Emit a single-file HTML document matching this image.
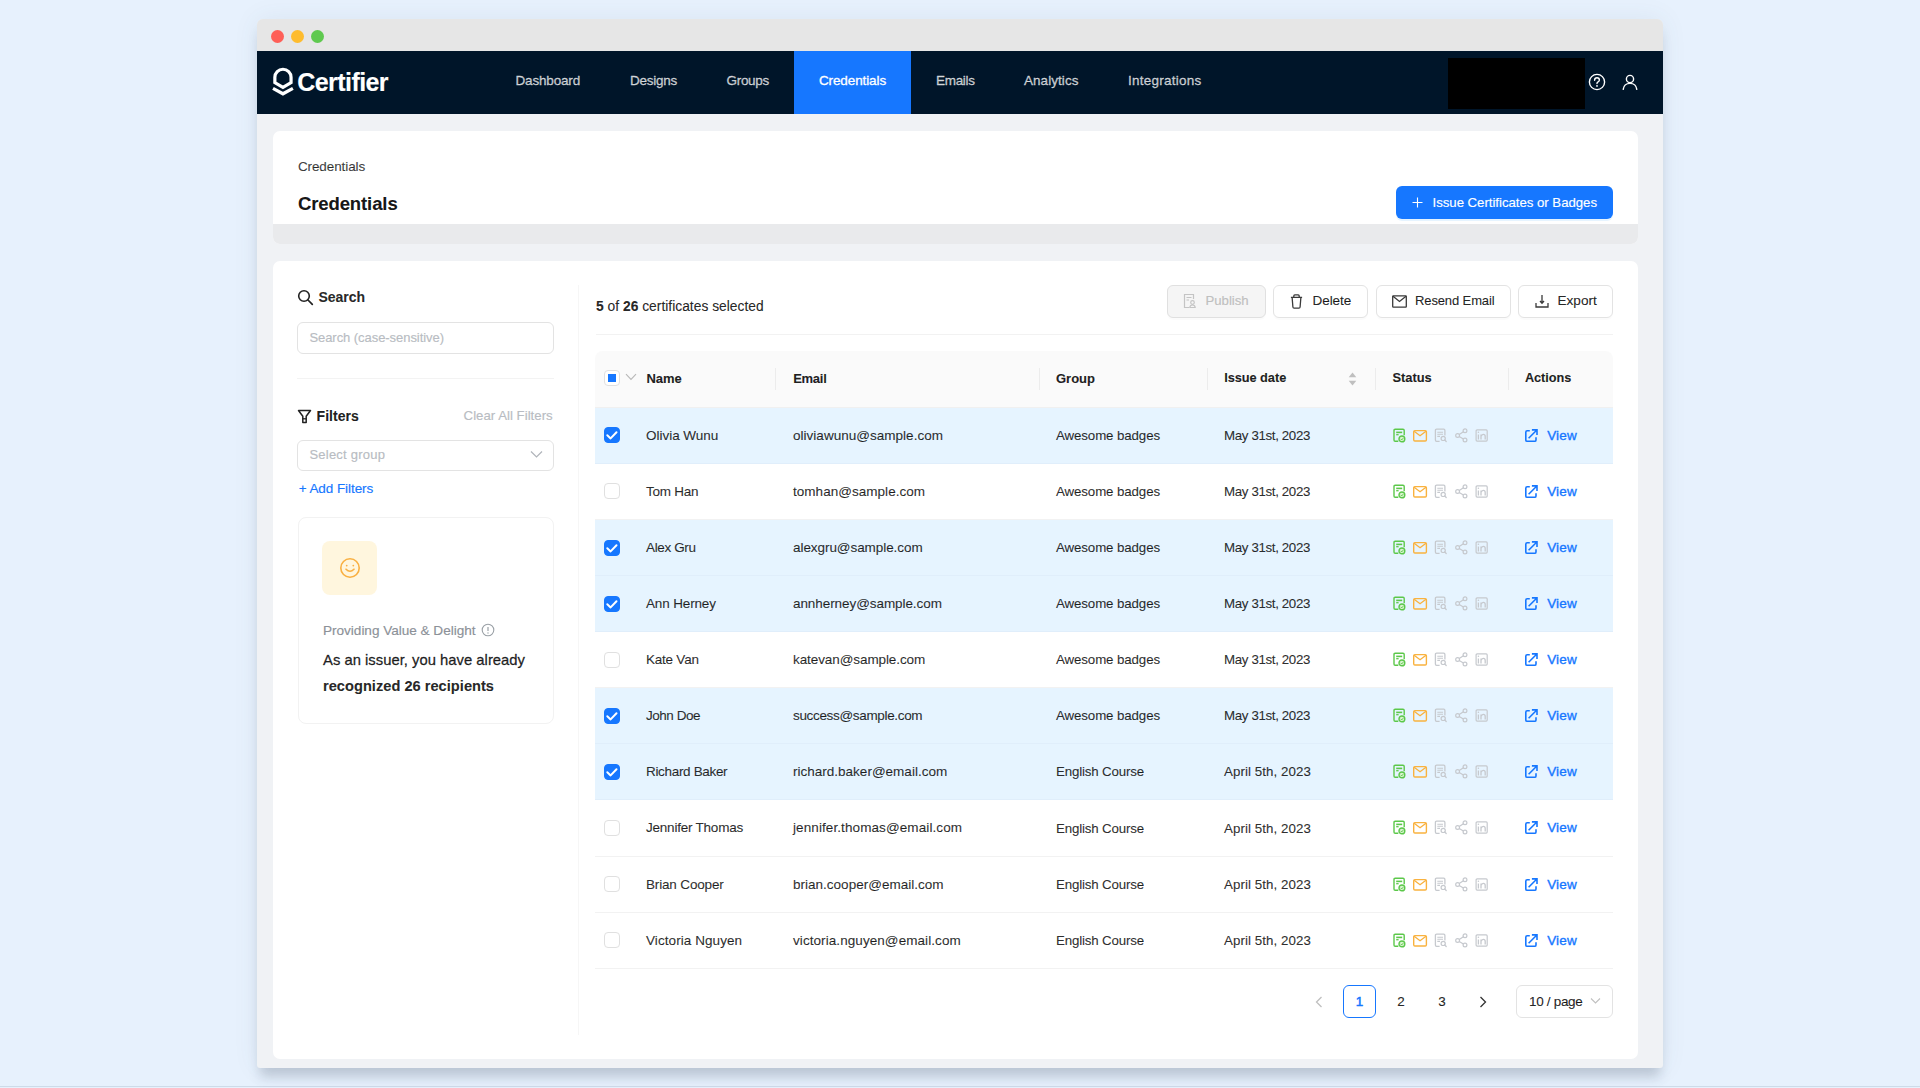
<!DOCTYPE html>
<html><head><meta charset="utf-8">
<style>
*{box-sizing:border-box;margin:0;padding:0}
html,body{width:1920px;height:1088px;overflow:hidden}
body{background:#e7f1fd;font-family:"Liberation Sans",sans-serif;position:relative;color:rgba(0,0,0,0.85)}
.a{position:absolute}
.t{position:absolute;white-space:nowrap;line-height:1;-webkit-text-stroke:0.15px currentColor}
.win{position:absolute;left:257px;top:19px;width:1406px;height:1049px;background:#f0f2f5;border-radius:6px 6px 3px 3px;box-shadow:0 12px 12px -3px rgba(70,85,105,0.24),0 0 26px rgba(70,85,105,0.08)}
.titlebar{position:absolute;left:257px;top:19px;width:1406px;height:33px;background:#e6e6e6;border-radius:6px 6px 0 0}
.dot{position:absolute;top:30px;width:13px;height:13px;border-radius:50%}
.nav{position:absolute;left:257px;top:51px;width:1406px;height:63px;background:#001529}
.card{position:absolute;background:#fff;border-radius:7px}
.btn{position:absolute;top:285px;height:33px;border:1px solid #e3e3e3;border-radius:6px;background:#fff;box-shadow:0 2px 0 rgba(0,0,0,0.016)}
.row{position:absolute;left:595px;width:1018px;border-bottom:1px solid #f2f2f2}
.row.sel{background:#e6f4ff;border-bottom-color:#e0eefb}
.cb{position:absolute;left:604px;width:16px;height:16px;border:1px solid #e0e0e0;border-radius:4px;background:#fff}
.cb.on{background:#1677ff;border-color:#1677ff}
.vsep{position:absolute;top:368px;width:1px;height:22px;background:#ececec}
</style></head>
<body>
<div class="win"></div>
<div class="a" style="left:0;top:1086px;width:1920px;height:1px;background:rgba(120,140,165,0.22)"></div>
<div class="titlebar"></div>
<div class="dot" style="left:271px;background:#fe5f57"></div>
<div class="dot" style="left:291px;background:#febc2e"></div>
<div class="dot" style="left:311px;background:#5fc94f"></div>
<div class="nav"></div>

<svg class="a" style="left:272px;top:66px" width="23" height="31" viewBox="0 0 23 31">
<path d="M2.85 16.6V11.35A8.1 8.1 0 0 1 19.05 11.35V16.6L10.95 21.4Z" fill="none" stroke="#fff" stroke-width="3.2" stroke-linejoin="miter"/>
<path d="M1 22.4L10.95 27.8L20.9 22.4" fill="none" stroke="#fff" stroke-width="3.3"/>
</svg>
<div class="t" style="left:297.3px;top:69.74px;font-size:25px;font-weight:700;color:#fff;letter-spacing:-0.575px;">Certifier</div>
<div class="t" style="left:515.5px;top:73.87px;font-size:13.5px;color:rgba(255,255,255,0.72);letter-spacing:-0.172px;-webkit-text-stroke:0.3px currentColor">Dashboard</div>
<div class="t" style="left:630px;top:73.87px;font-size:13.5px;color:rgba(255,255,255,0.72);letter-spacing:-0.254px;-webkit-text-stroke:0.3px currentColor">Designs</div>
<div class="t" style="left:726.5px;top:73.87px;font-size:13.5px;color:rgba(255,255,255,0.72);letter-spacing:-0.297px;-webkit-text-stroke:0.3px currentColor">Groups</div>
<div class="a" style="left:794px;top:51px;width:117px;height:63px;background:#1677ff"></div>
<div class="t" style="left:818.9px;top:73.87px;font-size:13.5px;color:#fff;letter-spacing:-0.100px;-webkit-text-stroke:0.3px currentColor">Credentials</div>
<div class="t" style="left:936px;top:73.87px;font-size:13.5px;color:rgba(255,255,255,0.72);letter-spacing:-0.303px;-webkit-text-stroke:0.3px currentColor">Emails</div>
<div class="t" style="left:1024px;top:73.87px;font-size:13.5px;color:rgba(255,255,255,0.72);letter-spacing:0.052px;-webkit-text-stroke:0.3px currentColor">Analytics</div>
<div class="t" style="left:1127.9px;top:73.87px;font-size:13.5px;color:rgba(255,255,255,0.72);letter-spacing:0.254px;-webkit-text-stroke:0.3px currentColor">Integrations</div>
<div class="a" style="left:1448px;top:58px;width:137px;height:51px;background:#000"></div>
<svg class="a" style="left:1587px;top:72px" width="20" height="20" viewBox="0 0 20 20"><circle cx="10" cy="10" r="7.6" fill="none" stroke="#fff" stroke-width="1.4"/><path d="M7.6 8.2Q7.6 5.8 10 5.8Q12.4 5.8 12.4 8Q12.4 9.4 10.8 10.1Q10 10.5 10 11.6" fill="none" stroke="#fff" stroke-width="1.4" stroke-linecap="round"/><circle cx="10" cy="13.9" r="0.9" fill="#fff"/></svg>
<svg class="a" style="left:1620px;top:72px" width="20" height="20" viewBox="0 0 20 20"><circle cx="10" cy="7" r="3.6" fill="none" stroke="#fff" stroke-width="1.4"/><path d="M3.2 17.4Q4 11.4 10 11.4Q16 11.4 16.8 17.4" fill="none" stroke="#fff" stroke-width="1.4" stroke-linecap="round"/></svg>
<div class="card" style="left:273px;top:131px;width:1365px;height:113px;overflow:hidden"><div class="a" style="left:0;top:93px;width:1365px;height:20px;background:#e9eaec"></div></div>
<div class="t" style="left:297.9px;top:159.57px;font-size:13.5px;color:rgba(0,0,0,0.75);letter-spacing:-0.091px;">Credentials</div>
<div class="t" style="left:297.9px;top:195.24px;font-size:18.5px;font-weight:700;color:rgba(0,0,0,0.92);letter-spacing:-0.097px;">Credentials</div>
<div class="a" style="left:1396px;top:186px;width:217px;height:33px;background:#1677ff;border-radius:6px;box-shadow:0 2px 0 rgba(5,145,255,0.1)"></div>
<div class="t" style="left:1432.5px;top:195.83px;font-size:13.2px;color:#fff;letter-spacing:-0.015px;">Issue Certificates or Badges</div>
<svg class="a" style="left:1412px;top:197px" width="11" height="11" viewBox="0 0 11 11"><path d="M5.5 0.5V10.5M0.5 5.5H10.5" stroke="#fff" stroke-width="1.1"/></svg>
<div class="card" style="left:273px;top:261px;width:1365px;height:798px"></div>
<svg class="a" style="left:297px;top:289px" width="17" height="17" viewBox="0 0 17 17"><circle cx="7" cy="7" r="5.3" fill="none" stroke="#222" stroke-width="1.6"/><path d="M11 11L15.3 15.3" stroke="#222" stroke-width="1.7" stroke-linecap="round"/></svg>
<div class="t" style="left:318.5px;top:290.45px;font-size:14px;font-weight:700;color:rgba(0,0,0,0.85);letter-spacing:-0.051px;">Search</div>
<div class="a" style="left:297px;top:322px;width:257px;height:32px;border:1px solid #e3e3e3;border-radius:6px;background:#fff"></div>
<div class="t" style="left:309.4px;top:330.50px;font-size:13px;color:#b8bcc2;letter-spacing:-0.053px;">Search (case-sensitive)</div>
<div class="a" style="left:297px;top:378px;width:257px;height:1px;background:#f3f3f3"></div>
<svg class="a" style="left:297px;top:409px" width="16" height="15" viewBox="0 0 16 15"><path d="M1.5 1.5H13.5L9.2 7.2V13.5H5.8V7.2Z" fill="none" stroke="#222" stroke-width="1.5" stroke-linejoin="round"/><path d="M5.8 9.8H9.2" stroke="#222" stroke-width="1.3"/></svg>
<div class="t" style="left:316.6px;top:409.45px;font-size:14px;font-weight:700;color:rgba(0,0,0,0.88);letter-spacing:0.041px;">Filters</div>
<div class="t" style="left:463.6px;top:408.83px;font-size:13.2px;color:#b8bcc2;letter-spacing:0.025px;">Clear All Filters</div>
<div class="a" style="left:297px;top:440px;width:257px;height:31px;border:1px solid #e3e3e3;border-radius:6px;background:#fff"></div>
<div class="t" style="left:309.4px;top:448.00px;font-size:13px;color:#b8bcc2;letter-spacing:0.233px;">Select group</div>
<svg class="a" style="left:530px;top:450px" width="13" height="9" viewBox="0 0 13 9"><path d="M1 1.5L6.5 7L12 1.5" fill="none" stroke="#b0b4ba" stroke-width="1.2"/></svg>
<div class="t" style="left:298.7px;top:481.57px;font-size:13.5px;color:#1677ff;letter-spacing:-0.071px;">+ Add Filters</div>
<div class="a" style="left:298px;top:517px;width:256px;height:207px;border:1px solid #f2f2f2;border-radius:8px;background:#fff"></div>
<div class="a" style="left:322px;top:541px;width:55px;height:54px;border-radius:8px;background:#fff6de"></div>
<svg class="a" style="left:337.5px;top:556px" width="24" height="24" viewBox="0 0 24 24"><circle cx="12" cy="12" r="9.2" fill="none" stroke="#f9b042" stroke-width="1.6"/><path d="M8 13.2Q12 17.2 16 13.2" fill="none" stroke="#f9b042" stroke-width="1.6" stroke-linecap="round"/><circle cx="8.7" cy="9.6" r="0.9" fill="#f9b042"/><circle cx="15.3" cy="9.6" r="0.9" fill="#f9b042"/></svg>
<div class="t" style="left:323px;top:624.29px;font-size:13.6px;color:#8c9198;letter-spacing:-0.026px;">Providing Value &amp; Delight</div>
<svg class="a" style="left:481px;top:623px" width="14" height="14" viewBox="0 0 14 14"><circle cx="7" cy="7" r="5.8" fill="none" stroke="#9aa0a6" stroke-width="1.1"/><path d="M7 4V8" stroke="#9aa0a6" stroke-width="1.2"/><circle cx="7" cy="10" r="0.7" fill="#9aa0a6"/></svg>
<div class="t" style="left:323px;top:653.47px;font-size:14.8px;color:rgba(0,0,0,0.86);letter-spacing:0.016px;-webkit-text-stroke:0.35px rgba(0,0,0,0.7)">As an issuer, you have already</div>
<div class="t" style="left:323px;top:678.84px;font-size:14.6px;font-weight:700;color:rgba(0,0,0,0.86);letter-spacing:0.028px;">recognized 26 recipients</div>
<div class="a" style="left:578px;top:285px;width:1px;height:750px;background:#f6f6f6"></div>
<div class="t" style="left:596px;top:300.32px;font-size:13.8px;color:rgba(0,0,0,0.86);letter-spacing:0.016px;"><b>5</b> of <b>26</b> certificates selected</div>
<div class="btn" style="left:1167px;width:99px;background:#f5f5f5;border-color:#e0e0e0"></div>
<svg class="a" style="left:1183px;top:293px" width="14" height="16" viewBox="0 0 14 16"><path d="M10.5 6V1.5H1.5V14.5H6" fill="none" stroke="#c4c4c4" stroke-width="1.2"/><path d="M3.5 4.5H8.5M3.5 7H6" stroke="#c4c4c4" stroke-width="1.2"/><circle cx="9.5" cy="9.5" r="1.8" fill="none" stroke="#c4c4c4" stroke-width="1.2"/><path d="M6.8 14.5Q7 12 9.5 12Q12 12 12.2 14.5Z" fill="none" stroke="#c4c4c4" stroke-width="1.2"/></svg>
<div class="t" style="left:1205.5px;top:294.03px;font-size:13.2px;color:#bfbfbf;letter-spacing:-0.009px;">Publish</div>
<div class="btn" style="left:1273px;width:95px"></div>
<svg class="a" style="left:1290px;top:294px" width="13" height="15" viewBox="0 0 13 15"><path d="M0.9 3.3H12.1M3.8 3.3V1.9Q3.8 0.9 4.8 0.9H8.2Q9.2 0.9 9.2 1.9V3.3M2.1 3.3L2.9 13Q3 14.1 4.1 14.1H8.9Q10 14.1 10.1 13L10.9 3.3" fill="none" stroke="#3a3a3a" stroke-width="1.3" stroke-linejoin="round"/></svg>
<div class="t" style="left:1312.5px;top:293.77px;font-size:13.5px;color:rgba(0,0,0,0.86);letter-spacing:-0.055px;">Delete</div>
<div class="btn" style="left:1376px;width:135px"></div>
<svg class="a" style="left:1392px;top:295px" width="15" height="13" viewBox="0 0 15 13"><rect x="0.7" y="0.8" width="13.6" height="11.4" rx="0.6" fill="none" stroke="#3a3a3a" stroke-width="1.3"/><path d="M1 1.2L7.5 6.5L14 1.2" fill="none" stroke="#3a3a3a" stroke-width="1.3"/></svg>
<div class="t" style="left:1415px;top:294.20px;font-size:13px;color:rgba(0,0,0,0.86);letter-spacing:-0.120px;">Resend Email</div>
<div class="btn" style="left:1518px;width:95px"></div>
<svg class="a" style="left:1535px;top:294px" width="14" height="14" viewBox="0 0 14 14"><path d="M7 1V9.2M5 7L7 9.2L9 7M1 9V13H13V9" fill="none" stroke="#3a3a3a" stroke-width="1.3"/></svg>
<div class="t" style="left:1557.5px;top:293.69px;font-size:13.6px;color:rgba(0,0,0,0.86);letter-spacing:-0.016px;">Export</div>
<div class="a" style="left:596px;top:334px;width:1017px;height:1px;background:#f2f2f2"></div>
<div class="a" style="left:595px;top:351px;width:1018px;height:57px;background:#fafafa;border-radius:8px 8px 0 0;border-bottom:1px solid #f0f0f0"></div>
<div class="cb" style="left:604px;top:370px;width:16px;height:16px"></div>
<div class="a" style="left:608px;top:374px;width:8px;height:8px;background:#1677ff"></div>
<svg class="a" style="left:625px;top:373px" width="12" height="8" viewBox="0 0 12 8"><path d="M1 1.2L6 6.5L11 1.2" fill="none" stroke="#b8b8b8" stroke-width="1.1"/></svg>
<div class="t" style="left:646.4px;top:372.20px;font-size:13px;font-weight:700;color:rgba(0,0,0,0.88);letter-spacing:-0.055px;">Name</div>
<div class="vsep" style="left:775px"></div>
<div class="t" style="left:793.2px;top:372.20px;font-size:13px;font-weight:700;color:rgba(0,0,0,0.88);letter-spacing:-0.278px;">Email</div>
<div class="vsep" style="left:1039px"></div>
<div class="t" style="left:1056px;top:372.20px;font-size:13px;font-weight:700;color:rgba(0,0,0,0.88);">Group</div>
<div class="vsep" style="left:1207px"></div>
<div class="t" style="left:1224.2px;top:372.36px;font-size:12.8px;font-weight:700;color:rgba(0,0,0,0.88);letter-spacing:-0.059px;">Issue date</div>
<svg class="a" style="left:1347px;top:371px" width="11" height="16" viewBox="0 0 11 16"><path d="M5.5 1.5L9.3 6.2H1.7Z" fill="#bfbfbf"/><path d="M5.5 14.5L9.3 9.8H1.7Z" fill="#bfbfbf"/></svg>
<div class="vsep" style="left:1375px"></div>
<div class="t" style="left:1392.5px;top:372.28px;font-size:12.9px;font-weight:700;color:rgba(0,0,0,0.88);letter-spacing:-0.034px;">Status</div>
<div class="vsep" style="left:1508px"></div>
<div class="t" style="left:1525px;top:372.45px;font-size:12.7px;font-weight:700;color:rgba(0,0,0,0.88);letter-spacing:-0.047px;">Actions</div>
<div class="row sel" style="top:408px;height:56px"></div>
<div class="cb on" style="top:427px"></div><svg class="a" style="left:604px;top:427px" width="16" height="16" viewBox="0 0 16 16"><path d="M3.3 8.3L6.6 11.4L12.5 5.3" fill="none" stroke="#fff" stroke-width="2" stroke-linecap="round" stroke-linejoin="round"/></svg>
<div class="t" style="left:646px;top:428.53px;font-size:13.5px;color:rgba(0,0,0,0.82);letter-spacing:-0.021px;">Olivia Wunu</div>
<div class="t" style="left:793px;top:428.53px;font-size:13.5px;color:rgba(0,0,0,0.82);letter-spacing:0.023px;">oliviawunu@sample.com</div>
<div class="t" style="left:1056px;top:428.70px;font-size:13.3px;color:rgba(0,0,0,0.82);letter-spacing:-0.105px;">Awesome badges</div>
<div class="t" style="left:1224px;top:428.70px;font-size:13.3px;color:rgba(0,0,0,0.82);letter-spacing:-0.352px;">May 31st, 2023</div>
<svg class="a" style="left:1392px;top:428px" width="98" height="15" viewBox="0 0 98 15"><path d="M6.3 13.3H3.2Q2 13.3 2 12.1V2.4Q2 1.2 3.2 1.2H11Q12.2 1.2 12.2 2.4V7.3" fill="none" stroke="#5cc84a" stroke-width="1.4"/><path d="M4.2 4.4H10.2" stroke="#5cc84a" stroke-width="1.6"/><path d="M4.2 6.7H6.6" stroke="#5cc84a" stroke-width="1.3"/><circle cx="9.9" cy="10.9" r="2.9" fill="#d9f3cf" stroke="#5cc84a" stroke-width="1.4"/><path d="M8.7 10.9L9.7 11.9L11.2 10.2" fill="none" stroke="#5cc84a" stroke-width="1"/><rect x="21.7" y="2.6" width="12.7" height="10.4" rx="1.2" fill="none" stroke="#f9b23f" stroke-width="1.4"/><path d="M22.1 3.3L28.05 7.7L34 3.3" fill="none" stroke="#f9b23f" stroke-width="1.4"/><path d="M47.6 13.3H44.6Q43.4 13.3 43.4 12.1V2.4Q43.4 1.2 44.6 1.2H51.7Q52.9 1.2 52.9 2.4V7.6" fill="none" stroke="#c6c9ce" stroke-width="1.3"/><path d="M45.3 4.3H51M45.3 6.3H51M45.3 8.4H48" stroke="#c6c9ce" stroke-width="1.1"/><circle cx="51.2" cy="10.4" r="2.1" fill="none" stroke="#c6c9ce" stroke-width="1.2"/><path d="M52.7 11.9L54.2 13.5" stroke="#c6c9ce" stroke-width="1.3" stroke-linecap="round"/><circle cx="65.6" cy="7.5" r="1.9" fill="none" stroke="#c6c9ce" stroke-width="1.2"/><circle cx="73" cy="2.8" r="1.9" fill="none" stroke="#c6c9ce" stroke-width="1.2"/><circle cx="73" cy="12" r="1.9" fill="none" stroke="#c6c9ce" stroke-width="1.2"/><path d="M67.2 6.5L71.4 3.8M67.2 8.5L71.4 11" stroke="#c6c9ce" stroke-width="1.2"/><rect x="84.1" y="1.9" width="11.1" height="11.2" rx="1" fill="none" stroke="#c6c9ce" stroke-width="1.2"/><path d="M86.4 6.4V11.6M89 6.4V11.6M89 8.4Q89.6 6.3 91.3 6.3Q93.2 6.3 93.2 8.4V11.6" fill="none" stroke="#c6c9ce" stroke-width="1.3"/><circle cx="86.4" cy="4.3" r="0.8" fill="#c6c9ce"/></svg>
<svg class="a" style="left:1524px;top:428px" width="15" height="15" viewBox="0 0 15 15" style="overflow:visible"><path d="M5.8 2.8H3.2Q1.8 2.8 1.8 4.2V11.9Q1.8 13.3 3.2 13.3H10.6Q12 13.3 12 11.9V9.3" fill="none" stroke="#1677ff" stroke-width="1.6"/><path d="M4.6 10.3L12.6 2.3M7.9 1.9H13V7" fill="none" stroke="#1677ff" stroke-width="1.6"/></svg>
<div class="t" style="left:1547.2px;top:428.53px;font-size:13.5px;color:#1677ff;letter-spacing:0.142px;-webkit-text-stroke:0.35px currentColor">View</div>
<div class="row" style="top:464px;height:56px"></div>
<div class="cb" style="top:483px"></div>
<div class="t" style="left:646px;top:484.66px;font-size:13.5px;color:rgba(0,0,0,0.82);letter-spacing:-0.262px;">Tom Han</div>
<div class="t" style="left:793px;top:484.66px;font-size:13.5px;color:rgba(0,0,0,0.82);letter-spacing:0.034px;">tomhan@sample.com</div>
<div class="t" style="left:1056px;top:484.83px;font-size:13.3px;color:rgba(0,0,0,0.82);letter-spacing:-0.105px;">Awesome badges</div>
<div class="t" style="left:1224px;top:484.83px;font-size:13.3px;color:rgba(0,0,0,0.82);letter-spacing:-0.352px;">May 31st, 2023</div>
<svg class="a" style="left:1392px;top:484px" width="98" height="15" viewBox="0 0 98 15"><path d="M6.3 13.3H3.2Q2 13.3 2 12.1V2.4Q2 1.2 3.2 1.2H11Q12.2 1.2 12.2 2.4V7.3" fill="none" stroke="#5cc84a" stroke-width="1.4"/><path d="M4.2 4.4H10.2" stroke="#5cc84a" stroke-width="1.6"/><path d="M4.2 6.7H6.6" stroke="#5cc84a" stroke-width="1.3"/><circle cx="9.9" cy="10.9" r="2.9" fill="#d9f3cf" stroke="#5cc84a" stroke-width="1.4"/><path d="M8.7 10.9L9.7 11.9L11.2 10.2" fill="none" stroke="#5cc84a" stroke-width="1"/><rect x="21.7" y="2.6" width="12.7" height="10.4" rx="1.2" fill="none" stroke="#f9b23f" stroke-width="1.4"/><path d="M22.1 3.3L28.05 7.7L34 3.3" fill="none" stroke="#f9b23f" stroke-width="1.4"/><path d="M47.6 13.3H44.6Q43.4 13.3 43.4 12.1V2.4Q43.4 1.2 44.6 1.2H51.7Q52.9 1.2 52.9 2.4V7.6" fill="none" stroke="#c6c9ce" stroke-width="1.3"/><path d="M45.3 4.3H51M45.3 6.3H51M45.3 8.4H48" stroke="#c6c9ce" stroke-width="1.1"/><circle cx="51.2" cy="10.4" r="2.1" fill="none" stroke="#c6c9ce" stroke-width="1.2"/><path d="M52.7 11.9L54.2 13.5" stroke="#c6c9ce" stroke-width="1.3" stroke-linecap="round"/><circle cx="65.6" cy="7.5" r="1.9" fill="none" stroke="#c6c9ce" stroke-width="1.2"/><circle cx="73" cy="2.8" r="1.9" fill="none" stroke="#c6c9ce" stroke-width="1.2"/><circle cx="73" cy="12" r="1.9" fill="none" stroke="#c6c9ce" stroke-width="1.2"/><path d="M67.2 6.5L71.4 3.8M67.2 8.5L71.4 11" stroke="#c6c9ce" stroke-width="1.2"/><rect x="84.1" y="1.9" width="11.1" height="11.2" rx="1" fill="none" stroke="#c6c9ce" stroke-width="1.2"/><path d="M86.4 6.4V11.6M89 6.4V11.6M89 8.4Q89.6 6.3 91.3 6.3Q93.2 6.3 93.2 8.4V11.6" fill="none" stroke="#c6c9ce" stroke-width="1.3"/><circle cx="86.4" cy="4.3" r="0.8" fill="#c6c9ce"/></svg>
<svg class="a" style="left:1524px;top:484px" width="15" height="15" viewBox="0 0 15 15" style="overflow:visible"><path d="M5.8 2.8H3.2Q1.8 2.8 1.8 4.2V11.9Q1.8 13.3 3.2 13.3H10.6Q12 13.3 12 11.9V9.3" fill="none" stroke="#1677ff" stroke-width="1.6"/><path d="M4.6 10.3L12.6 2.3M7.9 1.9H13V7" fill="none" stroke="#1677ff" stroke-width="1.6"/></svg>
<div class="t" style="left:1547.2px;top:484.66px;font-size:13.5px;color:#1677ff;letter-spacing:0.142px;-webkit-text-stroke:0.35px currentColor">View</div>
<div class="row sel" style="top:520px;height:56px"></div>
<div class="cb on" style="top:540px"></div><svg class="a" style="left:604px;top:540px" width="16" height="16" viewBox="0 0 16 16"><path d="M3.3 8.3L6.6 11.4L12.5 5.3" fill="none" stroke="#fff" stroke-width="2" stroke-linecap="round" stroke-linejoin="round"/></svg>
<div class="t" style="left:646px;top:540.79px;font-size:13.5px;color:rgba(0,0,0,0.82);letter-spacing:-0.366px;">Alex Gru</div>
<div class="t" style="left:793px;top:540.79px;font-size:13.5px;color:rgba(0,0,0,0.82);letter-spacing:-0.065px;">alexgru@sample.com</div>
<div class="t" style="left:1056px;top:540.96px;font-size:13.3px;color:rgba(0,0,0,0.82);letter-spacing:-0.105px;">Awesome badges</div>
<div class="t" style="left:1224px;top:540.96px;font-size:13.3px;color:rgba(0,0,0,0.82);letter-spacing:-0.352px;">May 31st, 2023</div>
<svg class="a" style="left:1392px;top:540px" width="98" height="15" viewBox="0 0 98 15"><path d="M6.3 13.3H3.2Q2 13.3 2 12.1V2.4Q2 1.2 3.2 1.2H11Q12.2 1.2 12.2 2.4V7.3" fill="none" stroke="#5cc84a" stroke-width="1.4"/><path d="M4.2 4.4H10.2" stroke="#5cc84a" stroke-width="1.6"/><path d="M4.2 6.7H6.6" stroke="#5cc84a" stroke-width="1.3"/><circle cx="9.9" cy="10.9" r="2.9" fill="#d9f3cf" stroke="#5cc84a" stroke-width="1.4"/><path d="M8.7 10.9L9.7 11.9L11.2 10.2" fill="none" stroke="#5cc84a" stroke-width="1"/><rect x="21.7" y="2.6" width="12.7" height="10.4" rx="1.2" fill="none" stroke="#f9b23f" stroke-width="1.4"/><path d="M22.1 3.3L28.05 7.7L34 3.3" fill="none" stroke="#f9b23f" stroke-width="1.4"/><path d="M47.6 13.3H44.6Q43.4 13.3 43.4 12.1V2.4Q43.4 1.2 44.6 1.2H51.7Q52.9 1.2 52.9 2.4V7.6" fill="none" stroke="#c6c9ce" stroke-width="1.3"/><path d="M45.3 4.3H51M45.3 6.3H51M45.3 8.4H48" stroke="#c6c9ce" stroke-width="1.1"/><circle cx="51.2" cy="10.4" r="2.1" fill="none" stroke="#c6c9ce" stroke-width="1.2"/><path d="M52.7 11.9L54.2 13.5" stroke="#c6c9ce" stroke-width="1.3" stroke-linecap="round"/><circle cx="65.6" cy="7.5" r="1.9" fill="none" stroke="#c6c9ce" stroke-width="1.2"/><circle cx="73" cy="2.8" r="1.9" fill="none" stroke="#c6c9ce" stroke-width="1.2"/><circle cx="73" cy="12" r="1.9" fill="none" stroke="#c6c9ce" stroke-width="1.2"/><path d="M67.2 6.5L71.4 3.8M67.2 8.5L71.4 11" stroke="#c6c9ce" stroke-width="1.2"/><rect x="84.1" y="1.9" width="11.1" height="11.2" rx="1" fill="none" stroke="#c6c9ce" stroke-width="1.2"/><path d="M86.4 6.4V11.6M89 6.4V11.6M89 8.4Q89.6 6.3 91.3 6.3Q93.2 6.3 93.2 8.4V11.6" fill="none" stroke="#c6c9ce" stroke-width="1.3"/><circle cx="86.4" cy="4.3" r="0.8" fill="#c6c9ce"/></svg>
<svg class="a" style="left:1524px;top:540px" width="15" height="15" viewBox="0 0 15 15" style="overflow:visible"><path d="M5.8 2.8H3.2Q1.8 2.8 1.8 4.2V11.9Q1.8 13.3 3.2 13.3H10.6Q12 13.3 12 11.9V9.3" fill="none" stroke="#1677ff" stroke-width="1.6"/><path d="M4.6 10.3L12.6 2.3M7.9 1.9H13V7" fill="none" stroke="#1677ff" stroke-width="1.6"/></svg>
<div class="t" style="left:1547.2px;top:540.79px;font-size:13.5px;color:#1677ff;letter-spacing:0.142px;-webkit-text-stroke:0.35px currentColor">View</div>
<div class="row sel" style="top:576px;height:56px"></div>
<div class="cb on" style="top:596px"></div><svg class="a" style="left:604px;top:596px" width="16" height="16" viewBox="0 0 16 16"><path d="M3.3 8.3L6.6 11.4L12.5 5.3" fill="none" stroke="#fff" stroke-width="2" stroke-linecap="round" stroke-linejoin="round"/></svg>
<div class="t" style="left:646px;top:596.92px;font-size:13.5px;color:rgba(0,0,0,0.82);letter-spacing:-0.150px;">Ann Herney</div>
<div class="t" style="left:793px;top:596.92px;font-size:13.5px;color:rgba(0,0,0,0.82);letter-spacing:-0.074px;">annherney@sample.com</div>
<div class="t" style="left:1056px;top:597.09px;font-size:13.3px;color:rgba(0,0,0,0.82);letter-spacing:-0.105px;">Awesome badges</div>
<div class="t" style="left:1224px;top:597.09px;font-size:13.3px;color:rgba(0,0,0,0.82);letter-spacing:-0.352px;">May 31st, 2023</div>
<svg class="a" style="left:1392px;top:596px" width="98" height="15" viewBox="0 0 98 15"><path d="M6.3 13.3H3.2Q2 13.3 2 12.1V2.4Q2 1.2 3.2 1.2H11Q12.2 1.2 12.2 2.4V7.3" fill="none" stroke="#5cc84a" stroke-width="1.4"/><path d="M4.2 4.4H10.2" stroke="#5cc84a" stroke-width="1.6"/><path d="M4.2 6.7H6.6" stroke="#5cc84a" stroke-width="1.3"/><circle cx="9.9" cy="10.9" r="2.9" fill="#d9f3cf" stroke="#5cc84a" stroke-width="1.4"/><path d="M8.7 10.9L9.7 11.9L11.2 10.2" fill="none" stroke="#5cc84a" stroke-width="1"/><rect x="21.7" y="2.6" width="12.7" height="10.4" rx="1.2" fill="none" stroke="#f9b23f" stroke-width="1.4"/><path d="M22.1 3.3L28.05 7.7L34 3.3" fill="none" stroke="#f9b23f" stroke-width="1.4"/><path d="M47.6 13.3H44.6Q43.4 13.3 43.4 12.1V2.4Q43.4 1.2 44.6 1.2H51.7Q52.9 1.2 52.9 2.4V7.6" fill="none" stroke="#c6c9ce" stroke-width="1.3"/><path d="M45.3 4.3H51M45.3 6.3H51M45.3 8.4H48" stroke="#c6c9ce" stroke-width="1.1"/><circle cx="51.2" cy="10.4" r="2.1" fill="none" stroke="#c6c9ce" stroke-width="1.2"/><path d="M52.7 11.9L54.2 13.5" stroke="#c6c9ce" stroke-width="1.3" stroke-linecap="round"/><circle cx="65.6" cy="7.5" r="1.9" fill="none" stroke="#c6c9ce" stroke-width="1.2"/><circle cx="73" cy="2.8" r="1.9" fill="none" stroke="#c6c9ce" stroke-width="1.2"/><circle cx="73" cy="12" r="1.9" fill="none" stroke="#c6c9ce" stroke-width="1.2"/><path d="M67.2 6.5L71.4 3.8M67.2 8.5L71.4 11" stroke="#c6c9ce" stroke-width="1.2"/><rect x="84.1" y="1.9" width="11.1" height="11.2" rx="1" fill="none" stroke="#c6c9ce" stroke-width="1.2"/><path d="M86.4 6.4V11.6M89 6.4V11.6M89 8.4Q89.6 6.3 91.3 6.3Q93.2 6.3 93.2 8.4V11.6" fill="none" stroke="#c6c9ce" stroke-width="1.3"/><circle cx="86.4" cy="4.3" r="0.8" fill="#c6c9ce"/></svg>
<svg class="a" style="left:1524px;top:596px" width="15" height="15" viewBox="0 0 15 15" style="overflow:visible"><path d="M5.8 2.8H3.2Q1.8 2.8 1.8 4.2V11.9Q1.8 13.3 3.2 13.3H10.6Q12 13.3 12 11.9V9.3" fill="none" stroke="#1677ff" stroke-width="1.6"/><path d="M4.6 10.3L12.6 2.3M7.9 1.9H13V7" fill="none" stroke="#1677ff" stroke-width="1.6"/></svg>
<div class="t" style="left:1547.2px;top:596.92px;font-size:13.5px;color:#1677ff;letter-spacing:0.142px;-webkit-text-stroke:0.35px currentColor">View</div>
<div class="row" style="top:632px;height:56px"></div>
<div class="cb" style="top:652px"></div>
<div class="t" style="left:646px;top:653.05px;font-size:13.5px;color:rgba(0,0,0,0.82);letter-spacing:-0.231px;">Kate Van</div>
<div class="t" style="left:793px;top:653.05px;font-size:13.5px;color:rgba(0,0,0,0.82);letter-spacing:-0.087px;">katevan@sample.com</div>
<div class="t" style="left:1056px;top:653.22px;font-size:13.3px;color:rgba(0,0,0,0.82);letter-spacing:-0.105px;">Awesome badges</div>
<div class="t" style="left:1224px;top:653.22px;font-size:13.3px;color:rgba(0,0,0,0.82);letter-spacing:-0.352px;">May 31st, 2023</div>
<svg class="a" style="left:1392px;top:652px" width="98" height="15" viewBox="0 0 98 15"><path d="M6.3 13.3H3.2Q2 13.3 2 12.1V2.4Q2 1.2 3.2 1.2H11Q12.2 1.2 12.2 2.4V7.3" fill="none" stroke="#5cc84a" stroke-width="1.4"/><path d="M4.2 4.4H10.2" stroke="#5cc84a" stroke-width="1.6"/><path d="M4.2 6.7H6.6" stroke="#5cc84a" stroke-width="1.3"/><circle cx="9.9" cy="10.9" r="2.9" fill="#d9f3cf" stroke="#5cc84a" stroke-width="1.4"/><path d="M8.7 10.9L9.7 11.9L11.2 10.2" fill="none" stroke="#5cc84a" stroke-width="1"/><rect x="21.7" y="2.6" width="12.7" height="10.4" rx="1.2" fill="none" stroke="#f9b23f" stroke-width="1.4"/><path d="M22.1 3.3L28.05 7.7L34 3.3" fill="none" stroke="#f9b23f" stroke-width="1.4"/><path d="M47.6 13.3H44.6Q43.4 13.3 43.4 12.1V2.4Q43.4 1.2 44.6 1.2H51.7Q52.9 1.2 52.9 2.4V7.6" fill="none" stroke="#c6c9ce" stroke-width="1.3"/><path d="M45.3 4.3H51M45.3 6.3H51M45.3 8.4H48" stroke="#c6c9ce" stroke-width="1.1"/><circle cx="51.2" cy="10.4" r="2.1" fill="none" stroke="#c6c9ce" stroke-width="1.2"/><path d="M52.7 11.9L54.2 13.5" stroke="#c6c9ce" stroke-width="1.3" stroke-linecap="round"/><circle cx="65.6" cy="7.5" r="1.9" fill="none" stroke="#c6c9ce" stroke-width="1.2"/><circle cx="73" cy="2.8" r="1.9" fill="none" stroke="#c6c9ce" stroke-width="1.2"/><circle cx="73" cy="12" r="1.9" fill="none" stroke="#c6c9ce" stroke-width="1.2"/><path d="M67.2 6.5L71.4 3.8M67.2 8.5L71.4 11" stroke="#c6c9ce" stroke-width="1.2"/><rect x="84.1" y="1.9" width="11.1" height="11.2" rx="1" fill="none" stroke="#c6c9ce" stroke-width="1.2"/><path d="M86.4 6.4V11.6M89 6.4V11.6M89 8.4Q89.6 6.3 91.3 6.3Q93.2 6.3 93.2 8.4V11.6" fill="none" stroke="#c6c9ce" stroke-width="1.3"/><circle cx="86.4" cy="4.3" r="0.8" fill="#c6c9ce"/></svg>
<svg class="a" style="left:1524px;top:652px" width="15" height="15" viewBox="0 0 15 15" style="overflow:visible"><path d="M5.8 2.8H3.2Q1.8 2.8 1.8 4.2V11.9Q1.8 13.3 3.2 13.3H10.6Q12 13.3 12 11.9V9.3" fill="none" stroke="#1677ff" stroke-width="1.6"/><path d="M4.6 10.3L12.6 2.3M7.9 1.9H13V7" fill="none" stroke="#1677ff" stroke-width="1.6"/></svg>
<div class="t" style="left:1547.2px;top:653.05px;font-size:13.5px;color:#1677ff;letter-spacing:0.142px;-webkit-text-stroke:0.35px currentColor">View</div>
<div class="row sel" style="top:688px;height:56px"></div>
<div class="cb on" style="top:708px"></div><svg class="a" style="left:604px;top:708px" width="16" height="16" viewBox="0 0 16 16"><path d="M3.3 8.3L6.6 11.4L12.5 5.3" fill="none" stroke="#fff" stroke-width="2" stroke-linecap="round" stroke-linejoin="round"/></svg>
<div class="t" style="left:646px;top:709.18px;font-size:13.5px;color:rgba(0,0,0,0.82);letter-spacing:-0.475px;">John Doe</div>
<div class="t" style="left:793px;top:709.18px;font-size:13.5px;color:rgba(0,0,0,0.82);letter-spacing:-0.331px;">success@sample.com</div>
<div class="t" style="left:1056px;top:709.35px;font-size:13.3px;color:rgba(0,0,0,0.82);letter-spacing:-0.105px;">Awesome badges</div>
<div class="t" style="left:1224px;top:709.35px;font-size:13.3px;color:rgba(0,0,0,0.82);letter-spacing:-0.352px;">May 31st, 2023</div>
<svg class="a" style="left:1392px;top:708px" width="98" height="15" viewBox="0 0 98 15"><path d="M6.3 13.3H3.2Q2 13.3 2 12.1V2.4Q2 1.2 3.2 1.2H11Q12.2 1.2 12.2 2.4V7.3" fill="none" stroke="#5cc84a" stroke-width="1.4"/><path d="M4.2 4.4H10.2" stroke="#5cc84a" stroke-width="1.6"/><path d="M4.2 6.7H6.6" stroke="#5cc84a" stroke-width="1.3"/><circle cx="9.9" cy="10.9" r="2.9" fill="#d9f3cf" stroke="#5cc84a" stroke-width="1.4"/><path d="M8.7 10.9L9.7 11.9L11.2 10.2" fill="none" stroke="#5cc84a" stroke-width="1"/><rect x="21.7" y="2.6" width="12.7" height="10.4" rx="1.2" fill="none" stroke="#f9b23f" stroke-width="1.4"/><path d="M22.1 3.3L28.05 7.7L34 3.3" fill="none" stroke="#f9b23f" stroke-width="1.4"/><path d="M47.6 13.3H44.6Q43.4 13.3 43.4 12.1V2.4Q43.4 1.2 44.6 1.2H51.7Q52.9 1.2 52.9 2.4V7.6" fill="none" stroke="#c6c9ce" stroke-width="1.3"/><path d="M45.3 4.3H51M45.3 6.3H51M45.3 8.4H48" stroke="#c6c9ce" stroke-width="1.1"/><circle cx="51.2" cy="10.4" r="2.1" fill="none" stroke="#c6c9ce" stroke-width="1.2"/><path d="M52.7 11.9L54.2 13.5" stroke="#c6c9ce" stroke-width="1.3" stroke-linecap="round"/><circle cx="65.6" cy="7.5" r="1.9" fill="none" stroke="#c6c9ce" stroke-width="1.2"/><circle cx="73" cy="2.8" r="1.9" fill="none" stroke="#c6c9ce" stroke-width="1.2"/><circle cx="73" cy="12" r="1.9" fill="none" stroke="#c6c9ce" stroke-width="1.2"/><path d="M67.2 6.5L71.4 3.8M67.2 8.5L71.4 11" stroke="#c6c9ce" stroke-width="1.2"/><rect x="84.1" y="1.9" width="11.1" height="11.2" rx="1" fill="none" stroke="#c6c9ce" stroke-width="1.2"/><path d="M86.4 6.4V11.6M89 6.4V11.6M89 8.4Q89.6 6.3 91.3 6.3Q93.2 6.3 93.2 8.4V11.6" fill="none" stroke="#c6c9ce" stroke-width="1.3"/><circle cx="86.4" cy="4.3" r="0.8" fill="#c6c9ce"/></svg>
<svg class="a" style="left:1524px;top:708px" width="15" height="15" viewBox="0 0 15 15" style="overflow:visible"><path d="M5.8 2.8H3.2Q1.8 2.8 1.8 4.2V11.9Q1.8 13.3 3.2 13.3H10.6Q12 13.3 12 11.9V9.3" fill="none" stroke="#1677ff" stroke-width="1.6"/><path d="M4.6 10.3L12.6 2.3M7.9 1.9H13V7" fill="none" stroke="#1677ff" stroke-width="1.6"/></svg>
<div class="t" style="left:1547.2px;top:709.18px;font-size:13.5px;color:#1677ff;letter-spacing:0.142px;-webkit-text-stroke:0.35px currentColor">View</div>
<div class="row sel" style="top:744px;height:56px"></div>
<div class="cb on" style="top:764px"></div><svg class="a" style="left:604px;top:764px" width="16" height="16" viewBox="0 0 16 16"><path d="M3.3 8.3L6.6 11.4L12.5 5.3" fill="none" stroke="#fff" stroke-width="2" stroke-linecap="round" stroke-linejoin="round"/></svg>
<div class="t" style="left:646px;top:765.31px;font-size:13.5px;color:rgba(0,0,0,0.82);letter-spacing:-0.327px;">Richard Baker</div>
<div class="t" style="left:793px;top:765.31px;font-size:13.5px;color:rgba(0,0,0,0.82);letter-spacing:0.008px;">richard.baker@email.com</div>
<div class="t" style="left:1056px;top:765.48px;font-size:13.3px;color:rgba(0,0,0,0.82);letter-spacing:-0.155px;">English Course</div>
<div class="t" style="left:1224px;top:765.48px;font-size:13.3px;color:rgba(0,0,0,0.82);letter-spacing:0.083px;">April 5th, 2023</div>
<svg class="a" style="left:1392px;top:764px" width="98" height="15" viewBox="0 0 98 15"><path d="M6.3 13.3H3.2Q2 13.3 2 12.1V2.4Q2 1.2 3.2 1.2H11Q12.2 1.2 12.2 2.4V7.3" fill="none" stroke="#5cc84a" stroke-width="1.4"/><path d="M4.2 4.4H10.2" stroke="#5cc84a" stroke-width="1.6"/><path d="M4.2 6.7H6.6" stroke="#5cc84a" stroke-width="1.3"/><circle cx="9.9" cy="10.9" r="2.9" fill="#d9f3cf" stroke="#5cc84a" stroke-width="1.4"/><path d="M8.7 10.9L9.7 11.9L11.2 10.2" fill="none" stroke="#5cc84a" stroke-width="1"/><rect x="21.7" y="2.6" width="12.7" height="10.4" rx="1.2" fill="none" stroke="#f9b23f" stroke-width="1.4"/><path d="M22.1 3.3L28.05 7.7L34 3.3" fill="none" stroke="#f9b23f" stroke-width="1.4"/><path d="M47.6 13.3H44.6Q43.4 13.3 43.4 12.1V2.4Q43.4 1.2 44.6 1.2H51.7Q52.9 1.2 52.9 2.4V7.6" fill="none" stroke="#c6c9ce" stroke-width="1.3"/><path d="M45.3 4.3H51M45.3 6.3H51M45.3 8.4H48" stroke="#c6c9ce" stroke-width="1.1"/><circle cx="51.2" cy="10.4" r="2.1" fill="none" stroke="#c6c9ce" stroke-width="1.2"/><path d="M52.7 11.9L54.2 13.5" stroke="#c6c9ce" stroke-width="1.3" stroke-linecap="round"/><circle cx="65.6" cy="7.5" r="1.9" fill="none" stroke="#c6c9ce" stroke-width="1.2"/><circle cx="73" cy="2.8" r="1.9" fill="none" stroke="#c6c9ce" stroke-width="1.2"/><circle cx="73" cy="12" r="1.9" fill="none" stroke="#c6c9ce" stroke-width="1.2"/><path d="M67.2 6.5L71.4 3.8M67.2 8.5L71.4 11" stroke="#c6c9ce" stroke-width="1.2"/><rect x="84.1" y="1.9" width="11.1" height="11.2" rx="1" fill="none" stroke="#c6c9ce" stroke-width="1.2"/><path d="M86.4 6.4V11.6M89 6.4V11.6M89 8.4Q89.6 6.3 91.3 6.3Q93.2 6.3 93.2 8.4V11.6" fill="none" stroke="#c6c9ce" stroke-width="1.3"/><circle cx="86.4" cy="4.3" r="0.8" fill="#c6c9ce"/></svg>
<svg class="a" style="left:1524px;top:764px" width="15" height="15" viewBox="0 0 15 15" style="overflow:visible"><path d="M5.8 2.8H3.2Q1.8 2.8 1.8 4.2V11.9Q1.8 13.3 3.2 13.3H10.6Q12 13.3 12 11.9V9.3" fill="none" stroke="#1677ff" stroke-width="1.6"/><path d="M4.6 10.3L12.6 2.3M7.9 1.9H13V7" fill="none" stroke="#1677ff" stroke-width="1.6"/></svg>
<div class="t" style="left:1547.2px;top:765.31px;font-size:13.5px;color:#1677ff;letter-spacing:0.142px;-webkit-text-stroke:0.35px currentColor">View</div>
<div class="row" style="top:800px;height:57px"></div>
<div class="cb" style="top:820px"></div>
<div class="t" style="left:646px;top:821.44px;font-size:13.5px;color:rgba(0,0,0,0.82);letter-spacing:-0.221px;">Jennifer Thomas</div>
<div class="t" style="left:793px;top:821.44px;font-size:13.5px;color:rgba(0,0,0,0.82);letter-spacing:0.093px;">jennifer.thomas@email.com</div>
<div class="t" style="left:1056px;top:821.61px;font-size:13.3px;color:rgba(0,0,0,0.82);letter-spacing:-0.155px;">English Course</div>
<div class="t" style="left:1224px;top:821.61px;font-size:13.3px;color:rgba(0,0,0,0.82);letter-spacing:0.083px;">April 5th, 2023</div>
<svg class="a" style="left:1392px;top:820px" width="98" height="15" viewBox="0 0 98 15"><path d="M6.3 13.3H3.2Q2 13.3 2 12.1V2.4Q2 1.2 3.2 1.2H11Q12.2 1.2 12.2 2.4V7.3" fill="none" stroke="#5cc84a" stroke-width="1.4"/><path d="M4.2 4.4H10.2" stroke="#5cc84a" stroke-width="1.6"/><path d="M4.2 6.7H6.6" stroke="#5cc84a" stroke-width="1.3"/><circle cx="9.9" cy="10.9" r="2.9" fill="#d9f3cf" stroke="#5cc84a" stroke-width="1.4"/><path d="M8.7 10.9L9.7 11.9L11.2 10.2" fill="none" stroke="#5cc84a" stroke-width="1"/><rect x="21.7" y="2.6" width="12.7" height="10.4" rx="1.2" fill="none" stroke="#f9b23f" stroke-width="1.4"/><path d="M22.1 3.3L28.05 7.7L34 3.3" fill="none" stroke="#f9b23f" stroke-width="1.4"/><path d="M47.6 13.3H44.6Q43.4 13.3 43.4 12.1V2.4Q43.4 1.2 44.6 1.2H51.7Q52.9 1.2 52.9 2.4V7.6" fill="none" stroke="#c6c9ce" stroke-width="1.3"/><path d="M45.3 4.3H51M45.3 6.3H51M45.3 8.4H48" stroke="#c6c9ce" stroke-width="1.1"/><circle cx="51.2" cy="10.4" r="2.1" fill="none" stroke="#c6c9ce" stroke-width="1.2"/><path d="M52.7 11.9L54.2 13.5" stroke="#c6c9ce" stroke-width="1.3" stroke-linecap="round"/><circle cx="65.6" cy="7.5" r="1.9" fill="none" stroke="#c6c9ce" stroke-width="1.2"/><circle cx="73" cy="2.8" r="1.9" fill="none" stroke="#c6c9ce" stroke-width="1.2"/><circle cx="73" cy="12" r="1.9" fill="none" stroke="#c6c9ce" stroke-width="1.2"/><path d="M67.2 6.5L71.4 3.8M67.2 8.5L71.4 11" stroke="#c6c9ce" stroke-width="1.2"/><rect x="84.1" y="1.9" width="11.1" height="11.2" rx="1" fill="none" stroke="#c6c9ce" stroke-width="1.2"/><path d="M86.4 6.4V11.6M89 6.4V11.6M89 8.4Q89.6 6.3 91.3 6.3Q93.2 6.3 93.2 8.4V11.6" fill="none" stroke="#c6c9ce" stroke-width="1.3"/><circle cx="86.4" cy="4.3" r="0.8" fill="#c6c9ce"/></svg>
<svg class="a" style="left:1524px;top:820px" width="15" height="15" viewBox="0 0 15 15" style="overflow:visible"><path d="M5.8 2.8H3.2Q1.8 2.8 1.8 4.2V11.9Q1.8 13.3 3.2 13.3H10.6Q12 13.3 12 11.9V9.3" fill="none" stroke="#1677ff" stroke-width="1.6"/><path d="M4.6 10.3L12.6 2.3M7.9 1.9H13V7" fill="none" stroke="#1677ff" stroke-width="1.6"/></svg>
<div class="t" style="left:1547.2px;top:821.44px;font-size:13.5px;color:#1677ff;letter-spacing:0.142px;-webkit-text-stroke:0.35px currentColor">View</div>
<div class="row" style="top:857px;height:56px"></div>
<div class="cb" style="top:876px"></div>
<div class="t" style="left:646px;top:877.57px;font-size:13.5px;color:rgba(0,0,0,0.82);letter-spacing:-0.162px;">Brian Cooper</div>
<div class="t" style="left:793px;top:877.57px;font-size:13.5px;color:rgba(0,0,0,0.82);letter-spacing:0.010px;">brian.cooper@email.com</div>
<div class="t" style="left:1056px;top:877.74px;font-size:13.3px;color:rgba(0,0,0,0.82);letter-spacing:-0.155px;">English Course</div>
<div class="t" style="left:1224px;top:877.74px;font-size:13.3px;color:rgba(0,0,0,0.82);letter-spacing:0.083px;">April 5th, 2023</div>
<svg class="a" style="left:1392px;top:877px" width="98" height="15" viewBox="0 0 98 15"><path d="M6.3 13.3H3.2Q2 13.3 2 12.1V2.4Q2 1.2 3.2 1.2H11Q12.2 1.2 12.2 2.4V7.3" fill="none" stroke="#5cc84a" stroke-width="1.4"/><path d="M4.2 4.4H10.2" stroke="#5cc84a" stroke-width="1.6"/><path d="M4.2 6.7H6.6" stroke="#5cc84a" stroke-width="1.3"/><circle cx="9.9" cy="10.9" r="2.9" fill="#d9f3cf" stroke="#5cc84a" stroke-width="1.4"/><path d="M8.7 10.9L9.7 11.9L11.2 10.2" fill="none" stroke="#5cc84a" stroke-width="1"/><rect x="21.7" y="2.6" width="12.7" height="10.4" rx="1.2" fill="none" stroke="#f9b23f" stroke-width="1.4"/><path d="M22.1 3.3L28.05 7.7L34 3.3" fill="none" stroke="#f9b23f" stroke-width="1.4"/><path d="M47.6 13.3H44.6Q43.4 13.3 43.4 12.1V2.4Q43.4 1.2 44.6 1.2H51.7Q52.9 1.2 52.9 2.4V7.6" fill="none" stroke="#c6c9ce" stroke-width="1.3"/><path d="M45.3 4.3H51M45.3 6.3H51M45.3 8.4H48" stroke="#c6c9ce" stroke-width="1.1"/><circle cx="51.2" cy="10.4" r="2.1" fill="none" stroke="#c6c9ce" stroke-width="1.2"/><path d="M52.7 11.9L54.2 13.5" stroke="#c6c9ce" stroke-width="1.3" stroke-linecap="round"/><circle cx="65.6" cy="7.5" r="1.9" fill="none" stroke="#c6c9ce" stroke-width="1.2"/><circle cx="73" cy="2.8" r="1.9" fill="none" stroke="#c6c9ce" stroke-width="1.2"/><circle cx="73" cy="12" r="1.9" fill="none" stroke="#c6c9ce" stroke-width="1.2"/><path d="M67.2 6.5L71.4 3.8M67.2 8.5L71.4 11" stroke="#c6c9ce" stroke-width="1.2"/><rect x="84.1" y="1.9" width="11.1" height="11.2" rx="1" fill="none" stroke="#c6c9ce" stroke-width="1.2"/><path d="M86.4 6.4V11.6M89 6.4V11.6M89 8.4Q89.6 6.3 91.3 6.3Q93.2 6.3 93.2 8.4V11.6" fill="none" stroke="#c6c9ce" stroke-width="1.3"/><circle cx="86.4" cy="4.3" r="0.8" fill="#c6c9ce"/></svg>
<svg class="a" style="left:1524px;top:877px" width="15" height="15" viewBox="0 0 15 15" style="overflow:visible"><path d="M5.8 2.8H3.2Q1.8 2.8 1.8 4.2V11.9Q1.8 13.3 3.2 13.3H10.6Q12 13.3 12 11.9V9.3" fill="none" stroke="#1677ff" stroke-width="1.6"/><path d="M4.6 10.3L12.6 2.3M7.9 1.9H13V7" fill="none" stroke="#1677ff" stroke-width="1.6"/></svg>
<div class="t" style="left:1547.2px;top:877.57px;font-size:13.5px;color:#1677ff;letter-spacing:0.142px;-webkit-text-stroke:0.35px currentColor">View</div>
<div class="row" style="top:913px;height:56px"></div>
<div class="cb" style="top:932px"></div>
<div class="t" style="left:646px;top:933.70px;font-size:13.5px;color:rgba(0,0,0,0.82);letter-spacing:0.076px;">Victoria Nguyen</div>
<div class="t" style="left:793px;top:933.70px;font-size:13.5px;color:rgba(0,0,0,0.82);letter-spacing:0.071px;">victoria.nguyen@email.com</div>
<div class="t" style="left:1056px;top:933.87px;font-size:13.3px;color:rgba(0,0,0,0.82);letter-spacing:-0.155px;">English Course</div>
<div class="t" style="left:1224px;top:933.87px;font-size:13.3px;color:rgba(0,0,0,0.82);letter-spacing:0.083px;">April 5th, 2023</div>
<svg class="a" style="left:1392px;top:933px" width="98" height="15" viewBox="0 0 98 15"><path d="M6.3 13.3H3.2Q2 13.3 2 12.1V2.4Q2 1.2 3.2 1.2H11Q12.2 1.2 12.2 2.4V7.3" fill="none" stroke="#5cc84a" stroke-width="1.4"/><path d="M4.2 4.4H10.2" stroke="#5cc84a" stroke-width="1.6"/><path d="M4.2 6.7H6.6" stroke="#5cc84a" stroke-width="1.3"/><circle cx="9.9" cy="10.9" r="2.9" fill="#d9f3cf" stroke="#5cc84a" stroke-width="1.4"/><path d="M8.7 10.9L9.7 11.9L11.2 10.2" fill="none" stroke="#5cc84a" stroke-width="1"/><rect x="21.7" y="2.6" width="12.7" height="10.4" rx="1.2" fill="none" stroke="#f9b23f" stroke-width="1.4"/><path d="M22.1 3.3L28.05 7.7L34 3.3" fill="none" stroke="#f9b23f" stroke-width="1.4"/><path d="M47.6 13.3H44.6Q43.4 13.3 43.4 12.1V2.4Q43.4 1.2 44.6 1.2H51.7Q52.9 1.2 52.9 2.4V7.6" fill="none" stroke="#c6c9ce" stroke-width="1.3"/><path d="M45.3 4.3H51M45.3 6.3H51M45.3 8.4H48" stroke="#c6c9ce" stroke-width="1.1"/><circle cx="51.2" cy="10.4" r="2.1" fill="none" stroke="#c6c9ce" stroke-width="1.2"/><path d="M52.7 11.9L54.2 13.5" stroke="#c6c9ce" stroke-width="1.3" stroke-linecap="round"/><circle cx="65.6" cy="7.5" r="1.9" fill="none" stroke="#c6c9ce" stroke-width="1.2"/><circle cx="73" cy="2.8" r="1.9" fill="none" stroke="#c6c9ce" stroke-width="1.2"/><circle cx="73" cy="12" r="1.9" fill="none" stroke="#c6c9ce" stroke-width="1.2"/><path d="M67.2 6.5L71.4 3.8M67.2 8.5L71.4 11" stroke="#c6c9ce" stroke-width="1.2"/><rect x="84.1" y="1.9" width="11.1" height="11.2" rx="1" fill="none" stroke="#c6c9ce" stroke-width="1.2"/><path d="M86.4 6.4V11.6M89 6.4V11.6M89 8.4Q89.6 6.3 91.3 6.3Q93.2 6.3 93.2 8.4V11.6" fill="none" stroke="#c6c9ce" stroke-width="1.3"/><circle cx="86.4" cy="4.3" r="0.8" fill="#c6c9ce"/></svg>
<svg class="a" style="left:1524px;top:933px" width="15" height="15" viewBox="0 0 15 15" style="overflow:visible"><path d="M5.8 2.8H3.2Q1.8 2.8 1.8 4.2V11.9Q1.8 13.3 3.2 13.3H10.6Q12 13.3 12 11.9V9.3" fill="none" stroke="#1677ff" stroke-width="1.6"/><path d="M4.6 10.3L12.6 2.3M7.9 1.9H13V7" fill="none" stroke="#1677ff" stroke-width="1.6"/></svg>
<div class="t" style="left:1547.2px;top:933.70px;font-size:13.5px;color:#1677ff;letter-spacing:0.142px;-webkit-text-stroke:0.35px currentColor">View</div>
<svg class="a" style="left:1313px;top:995px" width="12" height="14" viewBox="0 0 12 14"><path d="M8.5 2L3.5 7L8.5 12" fill="none" stroke="#bfbfbf" stroke-width="1.3"/></svg>
<div class="a" style="left:1343px;top:985px;width:33px;height:33px;border:1px solid #1677ff;border-radius:6px;background:#fff"></div>
<div class="t" style="left:1343px;top:995.07px;font-size:13.5px;color:#1677ff;width:33px;text-align:center;-webkit-text-stroke:0.5px currentColor">1</div>
<div class="t" style="left:1384.5px;top:995.07px;font-size:13.5px;color:rgba(0,0,0,0.86);width:33px;text-align:center">2</div>
<div class="t" style="left:1425.5px;top:995.07px;font-size:13.5px;color:rgba(0,0,0,0.86);width:33px;text-align:center">3</div>
<svg class="a" style="left:1477px;top:995px" width="12" height="14" viewBox="0 0 12 14"><path d="M3.5 2L8.5 7L3.5 12" fill="none" stroke="#333" stroke-width="1.3"/></svg>
<div class="a" style="left:1516px;top:985px;width:97px;height:33px;border:1px solid #e3e3e3;border-radius:6px;background:#fff"></div>
<div class="t" style="left:1529px;top:995.07px;font-size:13.5px;color:rgba(0,0,0,0.86);letter-spacing:-0.312px;">10 / page</div>
<svg class="a" style="left:1590px;top:997px" width="11" height="8" viewBox="0 0 11 8"><path d="M1 1.5L5.5 6L10 1.5" fill="none" stroke="#c0c0c0" stroke-width="1.1"/></svg>
<div class="a" style="left:595px;top:968px;width:1018px;height:1px;background:#f2f2f2"></div>
</body></html>
